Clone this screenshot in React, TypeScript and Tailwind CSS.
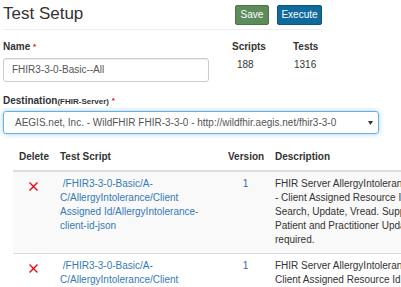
const rows = [
  {
    stripe: true,
    script: ["\u00a0/FHIR3-3-0-Basic/A-", "C/AllergyIntolerance/Client", "Assigned Id/AllergyIntolerance-", "client-id-json"],
    desc: [
      "FHIR Server AllergyIntolerance JSON Basic Operation Tests",
      "- Client Assigned Resource Id. Create, Delete, History, Read,",
      "Search, Update, Vread. Supports optional",
      "Patient and Practitioner Update/Create where",
      "required.",
    ],
  },
  {
    stripe: false,
    script: ["\u00a0/FHIR3-3-0-Basic/A-", "C/AllergyIntolerance/Client", "Assigned Id/AllergyIntolerance-", "client-id-xml"],
    desc: [
      "FHIR Server AllergyIntolerance XML Basic Operation Tests -",
      "Client Assigned Resource Id. Create, Delete, History, Read,",
      "Search, Update, Vread. Supports optional",
      "Patient and Practitioner Update/Create where",
      "required.",
    ],
  },
]

const RemoveIcon = () => (
  <svg width="9" height="9" viewBox="0 0 9 9" className="inline-block">
    <path d="M1 1 L8 8 M8 1 L1 8" stroke="#e8000b" strokeWidth="1.3" strokeLinecap="square" />
  </svg>
)

export default function App() {
  return (
    <div
      className="h-[287px] w-[401px] overflow-hidden bg-white text-[#333] text-[10px] leading-[14.2px]"
      style={{ fontFamily: '"Liberation Sans", Arial, sans-serif' }}
    >
      <div className="pl-[3px]">
        {/* header */}
        <div className="flex h-[30px] w-[319px] items-start justify-between border-b border-[#eee] pt-[4px]">
          <h3 className="text-[17px] leading-[20px] font-normal">Test Setup</h3>
          <div className="mt-[1px] flex gap-[8px]">
            <button className="h-[20px] w-[34px] rounded-[2px] border border-[#4c754c] bg-[#5d8b5c] text-[10px] text-white">
              Save
            </button>
            <button className="h-[20px] w-[45px] rounded-[2px] border border-[#0b5681] bg-[#106a9b] text-[10px] text-white">
              Execute
            </button>
          </div>
        </div>

        {/* name + counts */}
        <div className="mt-[10px] flex">
          <div className="w-[206px]">
            <label className="block font-bold">
              Name <span className="align-top text-[8px] text-[#e00]">*</span>
            </label>
            <div className="mt-[4px] flex h-[24px] items-center rounded-[3px] border border-[#ccc] pl-[8px] text-[#555] shadow-[inset_0_1px_1px_rgba(0,0,0,0.075)]">
              FHIR3-3-0-Basic--All
            </div>
          </div>
          <div className="ml-[23px] w-[61px]">
            <div className="font-bold">Scripts</div>
            <div className="mt-[4px] pl-[5px]">188</div>
          </div>
          <div>
            <div className="font-bold">Tests</div>
            <div className="mt-[4px] pl-[1px]">1316</div>
          </div>
        </div>

        {/* destination */}
        <div className="mt-[12px]">
          <label className="block font-bold">
            Destination<span className="text-[8px]">(FHIR-Server)</span>{" "}
            <span className="align-top text-[8px] text-[#e00]">*</span>
          </label>
          <div className="mt-[2px] flex h-[23px] w-[376px] items-center justify-between rounded-[3px] border border-[#66afe9] pl-[11px] pr-[5px] text-[#555] shadow-[0_0_5px_rgba(102,175,233,0.6)]">
            <span>AEGIS.net, Inc. - WildFHIR FHIR-3-3-0 - http://wildfhir.aegis.net/fhir3-3-0</span>
            <svg width="5" height="4" viewBox="0 0 5 4">
              <path d="M0 0 L5 0 L2.5 4 Z" fill="#333" />
            </svg>
          </div>
        </div>

        {/* table */}
        <table className="mt-[11px] ml-[10px] w-[560px] table-fixed border-collapse">
          <colgroup>
            <col className="w-[41px]" />
            <col className="w-[168px]" />
            <col className="w-[47px]" />
            <col />
          </colgroup>
          <thead>
            <tr className="border-b-2 border-[#ddd]">
              <th className="px-[6px] py-[5px] text-left font-bold">Delete</th>
              <th className="px-[6px] py-[5px] text-left font-bold">Test Script</th>
              <th className="px-[6px] py-[5px] text-left font-bold">Version</th>
              <th className="px-[6px] py-[5px] text-left font-bold">Description</th>
            </tr>
          </thead>
          <tbody>
            {rows.map((r, i) => (
              <tr key={i} className={`border-t border-[#ddd] align-top ${r.stripe ? "bg-[#f9f9f9]" : "bg-white"}`}>
                <td className="px-[6px] py-[5px] text-center">
                  <span className="inline-block pt-[3px]">
                    <RemoveIcon />
                  </span>
                </td>
                <td className="px-[6px] py-[5px] text-[#337ab7]">
                  {r.script.map((l, j) => (
                    <div key={j} className="whitespace-nowrap">{l}</div>
                  ))}
                </td>
                <td className="px-[6px] py-[5px] text-center text-[#2f6ea6]">1</td>
                <td className="px-[6px] py-[5px]">
                  {r.desc.map((l, j) => (
                    <div key={j} className="whitespace-nowrap">{l}</div>
                  ))}
                </td>
              </tr>
            ))}
          </tbody>
        </table>
      </div>
    </div>
  )
}
